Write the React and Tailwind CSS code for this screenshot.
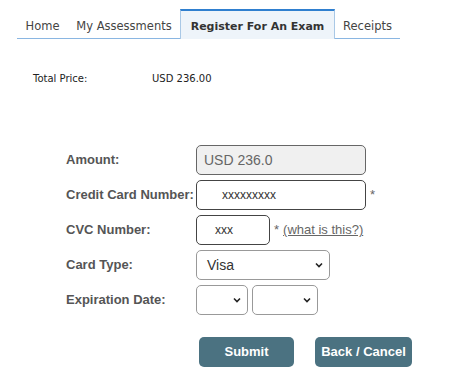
import React from "react";

const tabFont = { fontFamily: '"DejaVu Sans", Verdana, sans-serif' };

export default function App() {
  return (
    <div className="w-[474px] h-[387px] bg-white overflow-hidden">
      {/* Tabs */}
      <div
        className="ml-[17px] mt-[10px] w-[383px] flex items-end h-[29px] border-b border-[#8ab6e2] text-[11.5px] text-[#444] whitespace-nowrap"
        style={tabFont}
      >
        <div className="w-[51px] shrink-0 h-full flex items-center justify-center pt-[6px]">Home</div>
        <div className="w-[112px] shrink-0 h-full flex items-center justify-center pt-[6px]">My Assessments</div>
        <div className="w-[155px] shrink-0 h-[30px] -mb-px flex items-center justify-center pt-[5px] bg-[#eef4fa] border-t-2 border-t-[#2f7fcf] border-x border-x-[#a9c8e6] font-bold text-[11px] text-[#333]">
          Register For An Exam
        </div>
        <div className="w-[65px] shrink-0 h-full flex items-center justify-center pt-[6px]">Receipts</div>
      </div>

      {/* Total price */}
      <div
        className="mt-[32px] ml-[33px] flex text-[10px] text-[#222]"
        style={tabFont}
      >
        <div className="w-[119px]">Total Price:</div>
        <div>USD 236.00</div>
      </div>

      {/* Form */}
      <div
        className="mt-[59px] ml-[66px] flex flex-col gap-[5px] text-[#555]"
        style={{ fontFamily: '"Liberation Sans", Arial, sans-serif' }}
      >
        <div className="flex items-center h-[30px]">
          <div className="w-[130px] font-bold text-[13px]">Amount:</div>
          <div className="w-[170px] h-[30px] rounded-[5px] border border-[#666] bg-[#f0f0f0] flex items-center pl-[7px] text-[14px] text-[#666]">
            USD 236.0
          </div>
        </div>
        <div className="flex items-center h-[30px]">
          <div className="w-[130px] font-bold text-[13px] whitespace-nowrap">Credit Card Number:</div>
          <div className="w-[170px] h-[30px] rounded-[5px] border border-[#444] bg-white flex items-center pl-[25px] text-[12px] text-[#333]">
            xxxxxxxxx
          </div>
          <span className="ml-[4px] text-[13px] text-[#666]">*</span>
        </div>
        <div className="flex items-center h-[30px]">
          <div className="w-[130px] font-bold text-[13px]">CVC Number:</div>
          <div className="w-[74px] h-[30px] rounded-[5px] border border-[#444] bg-white flex items-center pl-[18px] text-[12px] text-[#333]">
            xxx
          </div>
          <span className="ml-[4px] text-[13px] text-[#666]">*</span>
          <span className="ml-[4px] text-[13px] text-[#666] underline">(what is this?)</span>
        </div>
        <div className="flex items-center h-[30px]">
          <div className="w-[130px] font-bold text-[13px]">Card Type:</div>
          <div className="w-[134px] h-[30px] rounded-[5px] border border-[#999] bg-white flex items-center justify-between pl-[10px] pr-[6px] text-[14px] text-[#333]">
            <span>Visa</span>
            <Chevron />
          </div>
        </div>
        <div className="flex items-center h-[30px]">
          <div className="w-[130px] font-bold text-[13px]">Expiration Date:</div>
          <div className="w-[52px] h-[30px] rounded-[5px] border border-[#999] bg-white flex items-center justify-end pr-[6px]">
            <Chevron />
          </div>
          <div className="ml-[4px] w-[66px] h-[30px] rounded-[5px] border border-[#999] bg-white flex items-center justify-end pr-[6px]">
            <Chevron />
          </div>
        </div>

        <div className="flex mt-[17px] ml-[133px] gap-[21px]">
          <button className="w-[95px] h-[30px] rounded-[5px] bg-[#4b7281] text-white font-bold text-[13px]">
            Submit
          </button>
          <button className="w-[97px] h-[30px] rounded-[5px] bg-[#4b7281] text-white font-bold text-[13px]">
            Back / Cancel
          </button>
        </div>
      </div>
    </div>
  );
}

function Chevron() {
  return (
    <svg width="8" height="6" viewBox="0 0 8 6">
      <path d="M1 1.5 L4 4.5 L7 1.5" fill="none" stroke="#222" strokeWidth="1.6" />
    </svg>
  );
}
